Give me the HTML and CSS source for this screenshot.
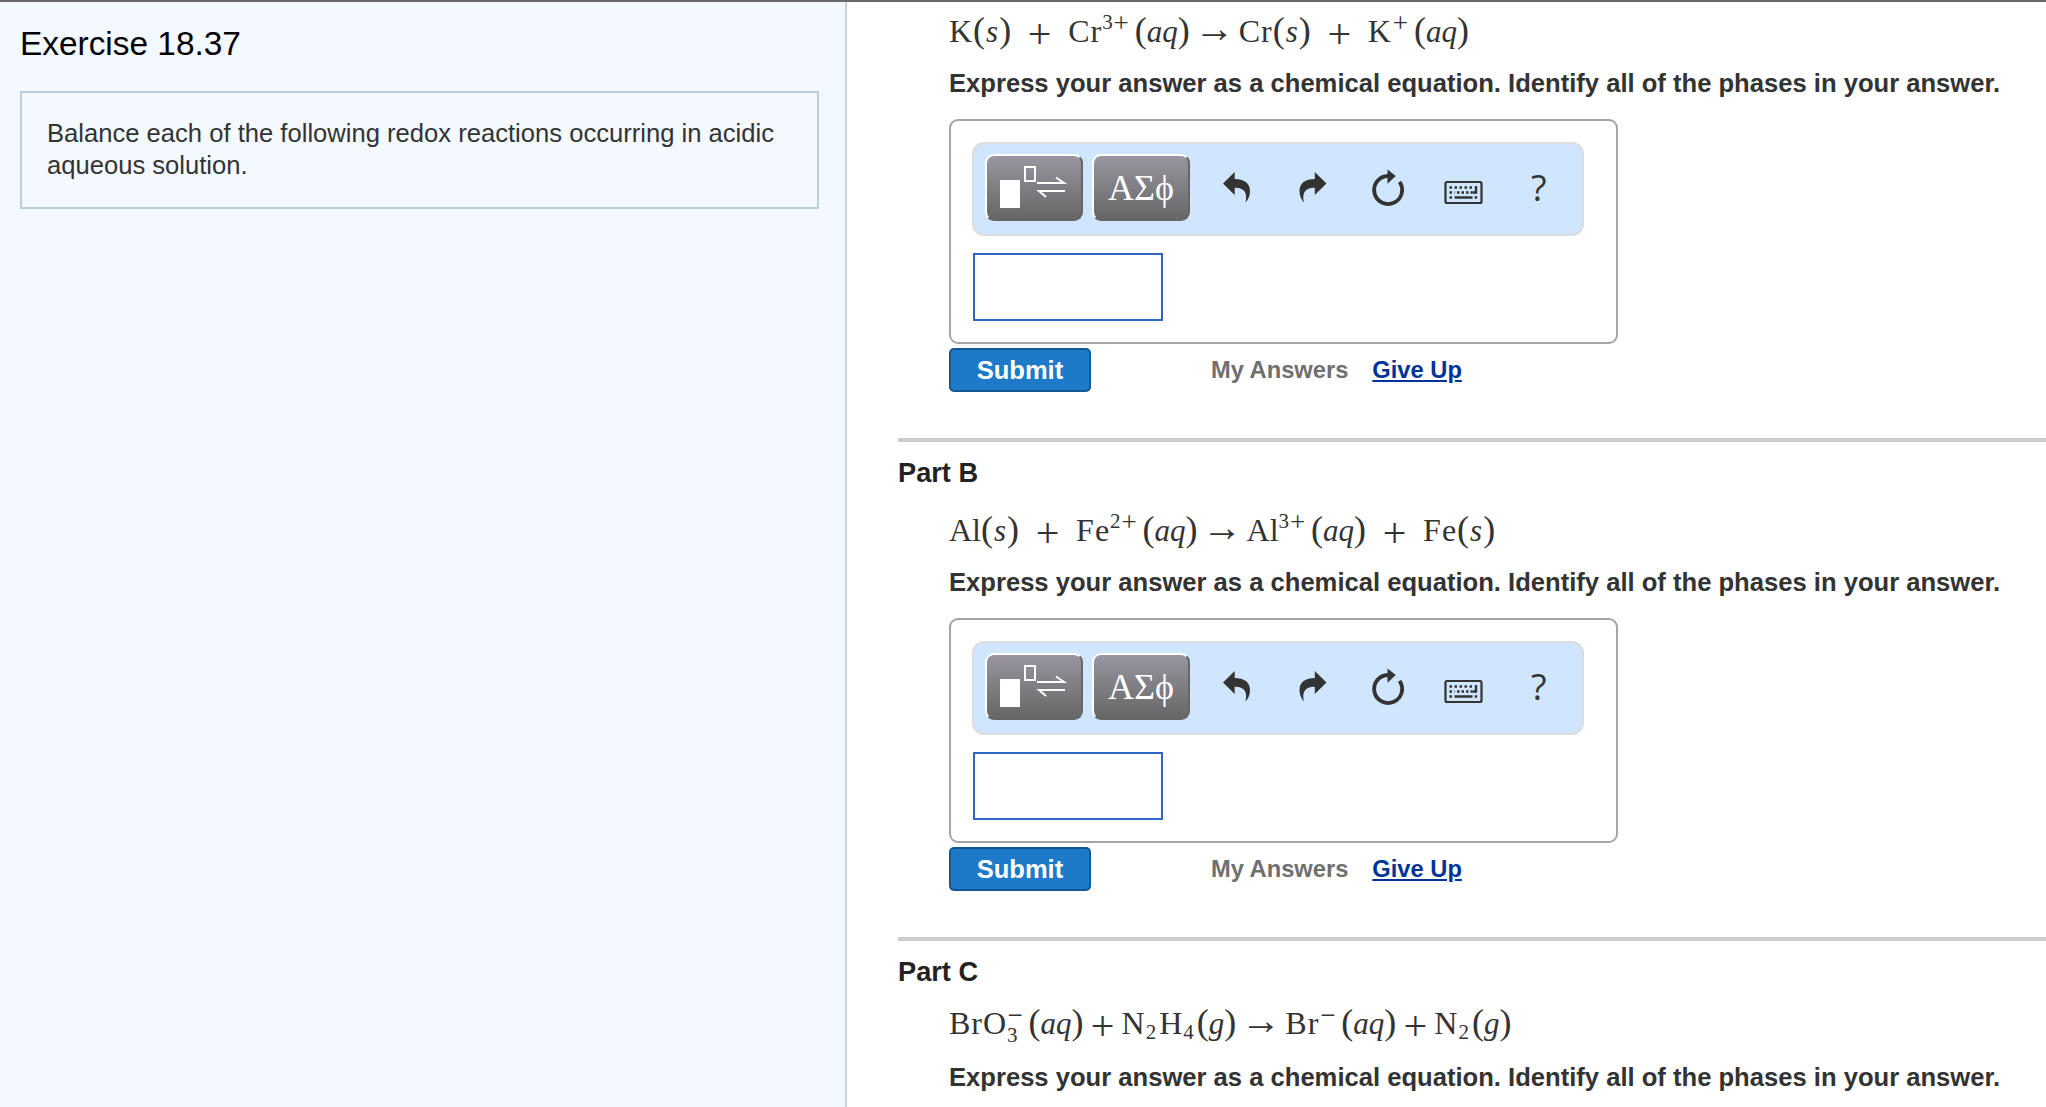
FILE: index.html
```html
<!DOCTYPE html>
<html lang="en">
<head>
  <meta charset="UTF-8">
  <meta name="viewport" content="width=device-width, initial-scale=1.0">
  <title>Exercise 18.37</title>
  <link rel="stylesheet" href="styles.css">
</head>
<body>
  <!-- shared toolbar icons -->
  <svg class="defs" width="0" height="0">
    <symbol id="undo" viewBox="0 0 75.5 67">
      <path d="M24 29.5L35.7 18V25C45 25 51 29 51 37C51 41.5 49.5 45.5 46.5 48.5C48.5 40 46.5 33.5 35.7 33.7V41Z"/>
    </symbol>
    <symbol id="redo" viewBox="0 0 75.5 67">
      <path d="M51.5 29.5L39.8 18V25C30.5 25 24.5 29 24.5 37C24.5 41.5 26 45.5 29 48.5C27 40 29 33.5 39.8 33.7V41Z"/>
    </symbol>
    <symbol id="reset" viewBox="0 0 75.5 67">
      <path d="M49.5 27.8A14 14 0 1 1 38 22" fill="none" stroke="#333" stroke-width="3.8"/>
      <path d="M37.5 15.5L45.8 22L37.5 29.8Z"/>
    </symbol>
    <symbol id="keyboard" viewBox="0 0 75.5 67">
      <rect x="19.5" y="28" width="36" height="21" rx="1.5" fill="none" stroke="#333" stroke-width="2.2"/>
      <path d="M23.5 33.5H46.5" fill="none" stroke="#333" stroke-width="2.4" stroke-dasharray="2.5 2.5"/>
      <path d="M23.5 38.5H28.5M31 38.5H46.5" fill="none" stroke="#333" stroke-width="2.4" stroke-dasharray="2.5 2"/>
      <path d="M46.5 38.5H50V32" fill="none" stroke="#333" stroke-width="2.4"/>
      <path d="M23.5 43.5H26M28.5 43.5H46.5M48.7 43.5H51.2" fill="none" stroke="#333" stroke-width="2.4"/>
    </symbol>
    <symbol id="template" viewBox="0 0 98 67">
      <rect x="15" y="26" width="20" height="28" fill="#fff"/>
      <rect x="40" y="13" width="10" height="14" fill="none" stroke="#fff" stroke-width="2"/>
      <path d="M52 29H79L71 23.5M80 37H54L61 43" fill="none" stroke="#fff" stroke-width="2"/>
    </symbol>
  </svg>

  <div class="page">
    <aside class="sidebar">
      <h1>Exercise 18.37</h1>
      <div class="intro">Balance each of the following redox reactions occurring in acidic aqueous solution.</div>
    </aside>

    <main class="content">
      <section class="part part-a">
        <div class="part-body">
          <div class="equation">
            <span class="el">K</span>
            <span class="state solid">(<i>s</i>)</span>
            <span class="plus wide">+</span>
            <span class="el">Cr<sup>3<b>+</b></sup></span>
            <span class="state">(<i>aq</i>)</span>
            <span class="arrow">→</span>
            <span class="el">Cr</span>
            <span class="state solid">(<i>s</i>)</span>
            <span class="plus wide">+</span>
            <span class="el">K<sup><b>+</b></sup></span>
            <span class="state">(<i>aq</i>)</span>
          </div>
          <p class="instructions">Express your answer as a chemical equation. Identify all of the phases in your answer.</p>
          <div class="answer-box">
            <div class="toolbar">
              <button class="palette"><svg><use href="#template"/></svg></button>
              <button class="palette">ΑΣϕ</button>
              <div class="tools">
                <svg><use href="#undo"/></svg>
                <svg><use href="#redo"/></svg>
                <svg><use href="#reset"/></svg>
                <svg><use href="#keyboard"/></svg>
                <span class="help">?</span>
              </div>
            </div>
            <div class="answer-input"></div>
          </div>
          <div class="actions">
            <button class="submit">Submit</button>
            <span class="my-answers">My Answers</span>
            <a class="give-up" href="#">Give Up</a>
          </div>
        </div>
      </section>

      <section class="part">
        <h2>Part B</h2>
        <div class="part-body">
          <div class="equation">
            <span class="el tight">Al</span>
            <span class="state solid">(<i>s</i>)</span>
            <span class="plus wide">+</span>
            <span class="el">Fe<sup>2<b>+</b></sup></span>
            <span class="state">(<i>aq</i>)</span>
            <span class="arrow">→</span>
            <span class="el tight">Al<sup>3<b>+</b></sup></span>
            <span class="state">(<i>aq</i>)</span>
            <span class="plus wide">+</span>
            <span class="el">Fe</span>
            <span class="state solid">(<i>s</i>)</span>
          </div>
          <p class="instructions">Express your answer as a chemical equation. Identify all of the phases in your answer.</p>
          <div class="answer-box">
            <div class="toolbar">
              <button class="palette"><svg><use href="#template"/></svg></button>
              <button class="palette">ΑΣϕ</button>
              <div class="tools">
                <svg><use href="#undo"/></svg>
                <svg><use href="#redo"/></svg>
                <svg><use href="#reset"/></svg>
                <svg><use href="#keyboard"/></svg>
                <span class="help">?</span>
              </div>
            </div>
            <div class="answer-input"></div>
          </div>
          <div class="actions">
            <button class="submit">Submit</button>
            <span class="my-answers">My Answers</span>
            <a class="give-up" href="#">Give Up</a>
          </div>
        </div>
      </section>

      <section class="part part-c">
        <h2>Part C</h2>
        <div class="part-body">
          <div class="equation">
            <span class="el">BrO<span class="stack"><sub>3</sub><sup><b>−</b></sup></span></span>
            <span class="state">(<i>aq</i>)</span>
            <span class="plus">+</span>
            <span class="el">N<sub>2</sub></span>
            <span class="el">H<sub>4</sub></span>
            <span class="state">(<i>g</i>)</span>
            <span class="arrow">→</span>
            <span class="el">Br<sup><b>−</b></sup></span>
            <span class="state">(<i>aq</i>)</span>
            <span class="plus">+</span>
            <span class="el">N<sub>2</sub></span>
            <span class="state">(<i>g</i>)</span>
          </div>
          <p class="instructions">Express your answer as a chemical equation. Identify all of the phases in your answer.</p>
        </div>
      </section>
    </main>
  </div>
</body>
</html>
```
FILE: styles.css
```css
* {
  box-sizing: border-box;
  margin: 0;
  padding: 0;
}

body {
  height: 100vh;
  overflow: hidden;
  border-top: 2px solid #6b6869;
  background-color: #ffffff;
  color: #333333;
  font-family: "Liberation Sans", Arial, sans-serif;
}

.defs {
  position: absolute;
}

.page {
  display: flex;
  height: 100%;
  overflow: hidden;
}

/* left column */
.sidebar {
  flex: none;
  width: 847px;
  padding: 22px 26px 0 20px;
  border-right: 2px solid #c3d3e0;
  background-color: #f4f9ff;
}

h1 {
  color: #000000;
  font-size: 33.4px;
  font-weight: normal;
  line-height: 40px;
}

.intro {
  height: 118px;
  margin-top: 27px;
  padding: 24px 25px;
  border: 2px solid #b9cddf;
  font-size: 25.6px;
  line-height: 32px;
}

/* right column */
.content {
  flex: 1;
  min-width: 0;
  padding-left: 51px;
}

.part {
  height: 499px;
  padding-top: 15px;
  border-top: 4px solid #cccccc;
}

.part-a {
  height: 436px;
  padding-top: 9px;
  border-top: none;
}

.part-c {
  height: auto;
}

.part-body {
  padding-left: 51px;
}

h2 {
  margin-bottom: 21px;
  color: #222222;
  font-size: 27.2px;
  line-height: 32px;
}

.part-c h2 {
  margin-bottom: 15px;
}

.equation {
  display: flex;
  align-items: baseline;
  height: 40px;
  font-family: "Liberation Serif", "Times New Roman", serif;
  font-size: 32px;
  line-height: 40px;
  white-space: nowrap;
}

.el {
  letter-spacing: 1px;
}

.tight {
  letter-spacing: 0;
}

.state {
  font-size: 36px;
  line-height: 0;
}

.state i {
  font-size: 31px;
}

.solid i {
  padding: 0 1px;
}

.plus {
  width: 24px;
  margin: 0 7px;
  font-size: 42px;
  line-height: 0;
  text-align: center;
  transform: translateY(6px);
}

.plus.wide {
  margin: 0 16.5px;
}

.arrow {
  width: 40px;
  margin: 0 4.5px;
  font-size: 40px;
  line-height: 0;
  text-align: center;
}

sup,
sub {
  font-size: 21px;
  letter-spacing: 0;
  line-height: 0;
}

sup {
  margin-right: 5px;
  vertical-align: 13px;
}

sup b {
  display: inline-block;
  width: 17px;
  font-size: 27px;
  font-weight: normal;
  text-align: center;
  transform: translateY(3px);
}

sub {
  margin-right: 3px;
  vertical-align: -5px;
}

.stack sub {
  margin-right: -11px;
  vertical-align: -8px;
}

.instructions {
  margin-top: 16px;
  font-size: 25.6px;
  font-weight: bold;
  line-height: 32px;
  white-space: nowrap;
}

.part-c .instructions {
  margin-top: 18px;
}

.answer-box {
  width: 669px;
  height: 225px;
  margin-top: 20px;
  padding: 21px;
  border: 2px solid #a5a5a5;
  border-radius: 9px;
}

.toolbar {
  display: flex;
  width: 612px;
  height: 94px;
  padding: 10px 0 10px 11px;
  border: 2px solid #dddddd;
  border-radius: 12px;
  background-color: #d0e5fe;
}

.palette {
  flex: none;
  width: 98px;
  height: 67px;
  margin-right: 9px;
  border: 2px solid;
  border-color: #ffffff #666666 #666666 #ffffff;
  border-radius: 9px;
  background: linear-gradient(#9996a1, #666666);
  color: #ffffff;
  font-family: "Liberation Serif", serif;
  font-size: 36px;
  line-height: 56px;
}

.palette svg {
  display: block;
  width: 98px;
  height: 67px;
  margin: -2px;
}

.tools {
  display: flex;
  fill: #333333;
}

.tools svg,
.help {
  width: 75.5px;
  height: 67px;
}

.help {
  font-family: "Open Sans", sans-serif;
  font-size: 36px;
  line-height: 67px;
  text-align: center;
}

.answer-input {
  width: 190px;
  height: 68px;
  margin: 17px 0 0 1px;
  border: 2px solid #2f64c8;
}

.actions {
  display: flex;
  align-items: center;
  margin-top: 4px;
  font-size: 23.7px;
  font-weight: bold;
}

.submit {
  width: 142px;
  height: 44px;
  margin-right: 120px;
  border: 2px solid #12578f;
  border-radius: 5px;
  background-color: #1c7ac8;
  color: #ffffff;
  font-family: inherit;
  font-size: 25.5px;
  font-weight: bold;
}

.my-answers {
  margin-right: 24px;
  color: #6f6f6f;
}

.give-up {
  color: #003399;
}
```
